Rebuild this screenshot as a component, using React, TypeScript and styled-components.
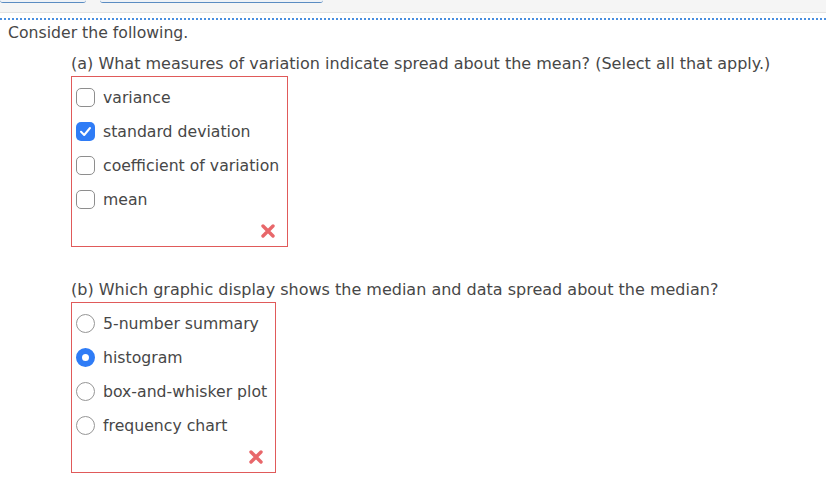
import { createGlobalStyle } from 'styled-components';
import styled from 'styled-components';

const GlobalStyle = createGlobalStyle`
	body {
		margin: 0;
		background: #ffffff;
		font-family: 'DejaVu Sans', Verdana, sans-serif;
		color: #474747;
	}
`;

const TopBar = styled.div`
	height: 12px;
	display: flex;
	gap: 14px;

	background-color: #f5f5f5;
	border-bottom: 1px solid #e2e2e2;
`;

const Tab = styled.div<{ $width: number }>`
	width: ${(props) => props.$width}px;
	height: 2px;

	background-color: #eef2f7;
	border-bottom: 1px solid #5a8cc2;
	border-radius: 0 0 4px 4px;
`;

const DottedRule = styled.div`
	height: 2px;
	margin-top: 5px;

	background-image: repeating-linear-gradient(to right, #4a8fe0 0 2px, transparent 2px 4px);
`;

const Intro = styled.p`
	margin: 0;
	padding: 2px 8px 0;

	font-size: 15.7px;
	line-height: 22px;
`;

const Part = styled.section<{ $top: number }>`
	margin-top: ${(props) => props.$top}px;
	padding-left: 71px;
`;

const Question = styled.p`
	margin: 0 0 1px;

	font-size: 16px;
	line-height: 22px;
`;

const AnswerBox = styled.div`
	display: inline-flex;
	flex-direction: column;

	padding: 3px 8px 0 4px;
	border: 1px solid #e05a5a;
`;

const Row = styled.label`
	height: 34px;

	display: flex;
	align-items: center;
	gap: 8px;

	font-size: 15.7px;
	white-space: nowrap;
`;

const CheckBox = styled.span<{ $checked?: boolean }>`
	width: 19px;
	height: 19px;
	box-sizing: border-box;

	display: flex;
	justify-content: center;
	align-items: center;

	border-radius: 5px;
	border: ${(props) => (props.$checked ? 'none' : '1.5px solid #8e8e8e')};
	background-color: ${(props) => (props.$checked ? '#2f7cf6' : '#ffffff')};
`;

const Radio = styled.span<{ $checked?: boolean }>`
	width: 19px;
	height: 19px;
	box-sizing: border-box;

	border-radius: 50%;
	border: ${(props) => (props.$checked ? '6px solid #2f7cf6' : '1.5px solid #969696')};
	background-color: #ffffff;
`;

const Feedback = styled.div`
	height: 30px;

	display: flex;
	justify-content: flex-end;
	align-items: center;

	padding-right: 4px;
`;

const WrongMark = () => (
	<svg width="14" height="14" viewBox="0 0 14 14">
		<path d="M2 2 L12 12 M12 2 L2 12" stroke="#e8676a" strokeWidth="3.4" strokeLinecap="round" />
	</svg>
);

const CheckMark = () => (
	<svg width="13" height="13" viewBox="0 0 13 13">
		<path d="M2 6.8 L5.2 10 L11 3" fill="none" stroke="#ffffff" strokeWidth="2" strokeLinecap="round" strokeLinejoin="round" />
	</svg>
);

const partA = [
	{ label: 'variance', checked: false },
	{ label: 'standard deviation', checked: true },
	{ label: 'coefficient of variation', checked: false },
	{ label: 'mean', checked: false },
];

const partB = [
	{ label: '5-number summary', checked: false },
	{ label: 'histogram', checked: true },
	{ label: 'box-and-whisker plot', checked: false },
	{ label: 'frequency chart', checked: false },
];

const App = () => {
	return (
		<>
			<GlobalStyle />
			<TopBar>
				<Tab $width={86} />
				<Tab $width={223} />
			</TopBar>
			<DottedRule />
			<Intro>Consider the following.</Intro>

			<Part $top={9}>
				<Question>(a) What measures of variation indicate spread about the mean? (Select all that apply.)</Question>
				<AnswerBox>
					{partA.map((option) => (
						<Row key={option.label}>
							<CheckBox $checked={option.checked}>{option.checked && <CheckMark />}</CheckBox>
							{option.label}
						</Row>
					))}
					<Feedback>
						<WrongMark />
					</Feedback>
				</AnswerBox>
			</Part>

			<Part $top={32}>
				<Question>(b) Which graphic display shows the median and data spread about the median?</Question>
				<AnswerBox>
					{partB.map((option) => (
						<Row key={option.label}>
							<Radio $checked={option.checked} />
							{option.label}
						</Row>
					))}
					<Feedback>
						<WrongMark />
					</Feedback>
				</AnswerBox>
			</Part>
		</>
	);
};

export default App;
